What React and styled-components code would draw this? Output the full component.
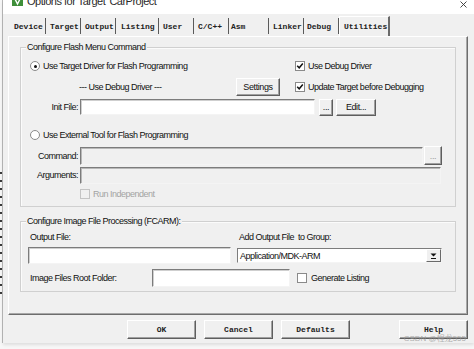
import React from "react";
import styled, { createGlobalStyle } from "styled-components";

const Global = createGlobalStyle`
  html, body { margin: 0; padding: 0; background: #f7f7f7; }
  body { font-family: "Liberation Sans", Arial, sans-serif; }
  * { box-sizing: border-box; }
`;

const px = (v) => (typeof v === "string" ? v : `${v || 0}px`);

const Page = styled.div`
  width: 474px;
  height: 349px;
  display: flex;
  overflow: hidden;
  background: #f7f7f7;
`;

const LeftEdge = styled.div`
  width: 3px;
  flex: none;
  height: 343px;
  background: #f6f6f6;
  border-right: 1px solid #b8b8b8;
  display: flex;
  flex-direction: column;
`;

const EdgeTicks = styled.div`
  margin-top: 172px;
  height: 128px;
  width: 2px;
  background: repeating-linear-gradient(to bottom, #3a3a3a 0 2px, transparent 2px 8px);
`;

const Window = styled.div`
  position: relative;
  flex: 1;
  height: 343px;
  background: #f0f0f0;
  display: flex;
  flex-direction: column;
  padding: 0 6px 0 5px;
  box-shadow: 0 2px 3px rgba(0, 0, 0, 0.1);
`;

const TitleBar = styled.div`
  height: 14px;
  margin: 0 -6px 0 -5px;
  background: #fff;
  display: flex;
  align-items: flex-start;
  padding-left: 9px;
  overflow: hidden;
`;

const TitleIcon = styled.svg`
  margin-top: -6px;
  flex: none;
`;

const TitleText = styled.span`
  margin-top: -4px;
  margin-left: 4px;
  font-size: 11px;
  line-height: 11px;
  letter-spacing: -0.5px;
  color: #2a2a2a;
  white-space: nowrap;
`;

const CloseIcon = styled.svg`
  margin-left: auto;
  margin-right: 7px;
  margin-top: 1px;
`;

const TabStrip = styled.div`
  height: 22px;
  display: flex;
  align-items: flex-end;
`;

const Tab = styled.div`
  width: ${(p) => p.$w}px;
  height: ${(p) => (p.$active ? 20 : 16)}px;
  padding-left: ${(p) => p.$pad}px;
  display: flex;
  align-items: center;
  font-family: "Liberation Mono", "Courier New", monospace;
  font-weight: bold;
  font-size: 8px;
  color: #222;
  white-space: nowrap;
  border-right: ${(p) => (p.$active ? "2px solid #6a6a6a" : "1px solid #5a5a5a")};
  border-top: ${(p) => (p.$active ? "1px solid #ffffff" : "none")};
  border-left: ${(p) => (p.$active ? "1px solid #ffffff" : "none")};
  margin-bottom: ${(p) => (p.$active ? 0 : 2)}px;
`;

const Panel = styled.div`
  width: 460px;
  height: 279px;
  border: 1px solid;
  border-color: #ffffff #6d6d6d #6d6d6d #ffffff;
  box-shadow: inset -1px -1px 0 #a8a8a8;
  padding: 10px 11px 0 11px;
  display: flex;
  flex-direction: column;
`;

const GroupBox = styled.div`
  position: relative;
  height: ${(p) => p.$h}px;
  margin-top: ${(p) => p.$mt || 0}px;
  border: 1px solid #d0d0d0;
  box-shadow: inset 1px 1px 0 #fbfbfb;
  padding: ${(p) => p.$pad};
  display: flex;
  flex-direction: column;
`;

const GroupTitle = styled.span`
  position: absolute;
  top: -6px;
  left: 5px;
  padding: 0 1px;
  background: #f0f0f0;
  font-size: 9px;
  line-height: 11px;
  letter-spacing: -0.5px;
  color: #111;
  white-space: nowrap;
`;

const Row = styled.div`
  display: flex;
  align-items: center;
  height: ${(p) => p.$h}px;
  margin-top: ${(p) => p.$mt || 0}px;
  padding-left: ${(p) => p.$pl || 0}px;
  flex: none;
`;

const Cell = styled.div`
  display: flex;
  align-items: center;
  width: ${(p) => p.$w}px;
  flex: none;
  height: 100%;
`;

const Text = styled.span`
  font-size: 9px;
  letter-spacing: -0.5px;
  color: ${(p) => (p.$disabled ? "#a3a3a3" : "#111")};
  white-space: nowrap;
  margin-left: ${(p) => px(p.$ml)};
`;

const FieldLabel = styled.span`
  width: ${(p) => (p.$w ? `${p.$w}px` : "auto")};
  flex: none;
  text-align: ${(p) => p.$align || "right"};
  padding-left: ${(p) => p.$pl || 0}px;
  font-size: 9px;
  letter-spacing: -0.5px;
  color: #111;
  white-space: nowrap;
`;

const Input = styled.div`
  width: ${(p) => p.$w}px;
  height: ${(p) => p.$h}px;
  flex: none;
  margin-left: ${(p) => px(p.$ml)};
  background: ${(p) => (p.$disabled ? "#f0f0f0" : "#ffffff")};
  border: 1px solid;
  border-color: #7c7c7c #f4f4f4 #f4f4f4 #7c7c7c;
  box-shadow: inset 1px 1px 0 ${(p) => (p.$disabled ? "#b8b8b8" : "#cfcfcf")};
`;

const Button = styled.div`
  width: ${(p) => p.$w}px;
  height: ${(p) => p.$h}px;
  flex: none;
  margin-left: ${(p) => px(p.$ml)};
  display: flex;
  align-items: center;
  justify-content: center;
  background: #f0f0f0;
  border: 1px solid;
  border-color: #ffffff #5e5e5e #5e5e5e #ffffff;
  box-shadow: inset -1px -1px 0 #a0a0a0;
  font-size: 9px;
  letter-spacing: -0.4px;
  color: ${(p) => (p.$disabled ? "#9a9a9a" : "#111")};
  white-space: nowrap;
`;

const BigButton = styled(Button)`
  font-family: "Liberation Mono", "Courier New", monospace;
  font-weight: bold;
  font-size: 8px;
  letter-spacing: 0;
  color: #222;
`;

const RadioCircle = styled.span`
  width: 10px;
  height: 10px;
  flex: none;
  border-radius: 50%;
  background: #fff;
  border: 1px solid #8a8a8a;
  display: flex;
  align-items: center;
  justify-content: center;
  &::after {
    content: "";
    width: 3px;
    height: 3px;
    border-radius: 50%;
    background: ${(p) => (p.$on ? "#111" : "transparent")};
  }
`;

const CheckBox = styled.span`
  width: 10px;
  height: 10px;
  flex: none;
  background: ${(p) => (p.$disabled ? "#f0f0f0" : "#fff")};
  border: 1px solid ${(p) => (p.$disabled ? "#c4c4c4" : "#8a8a8a")};
  display: flex;
  align-items: center;
  justify-content: center;
`;

const ImageGrid = styled.div`
  display: grid;
  grid-template-columns: 203px 205px;
  column-gap: 6px;
  align-items: center;
  height: ${(p) => p.$h}px;
  margin-top: ${(p) => p.$mt || 0}px;
`;

const Select = styled.div`
  width: 205px;
  height: 15px;
  display: flex;
  align-items: center;
  background: #fff;
  border: 1px solid;
  border-color: #7c7c7c #f4f4f4 #f4f4f4 #7c7c7c;
  padding-left: 2px;
  font-size: 9px;
  letter-spacing: -0.5px;
  color: #111;
`;

const SelectArrow = styled.span`
  margin-left: auto;
  width: 15px;
  height: 13px;
  display: flex;
  align-items: center;
  justify-content: center;
  background: #f0f0f0;
  border: 1px solid;
  border-color: #ffffff #6a6a6a #6a6a6a #ffffff;
`;

const ButtonBar = styled.div`
  display: flex;
  align-items: center;
  gap: 8px;
  margin-top: 5px;
  padding-left: 119px;
  height: 19px;
  width: 460px;
`;

const HelpSlot = styled.div`
  margin-left: auto;
  display: flex;
`;

const Watermark = styled.span`
  position: absolute;
  right: 8px;
  bottom: 0px;
  font-family: "Liberation Sans", "Noto Sans CJK SC", sans-serif;
  font-size: 8px;
  line-height: 9px;
  color: rgba(150, 150, 150, 0.75);
  white-space: nowrap;
`;

const Check = ({ on = true, disabled }) => (
  <CheckBox $disabled={disabled}>
    {on && (
      <svg width="8" height="8" viewBox="0 0 8 8">
        <path d="M1.2 3.8 L3.2 5.8 L6.8 1.6" fill="none" stroke="#111" strokeWidth="1.5" />
      </svg>
    )}
  </CheckBox>
);

const tabs = [
  { label: "Device", w: 38, pad: 6 },
  { label: "Target", w: 35, pad: 4 },
  { label: "Output", w: 35, pad: 4 },
  { label: "Listing", w: 43, pad: 5 },
  { label: "User", w: 35, pad: 4 },
  { label: "C/C++", w: 35, pad: 4 },
  { label: "Asm", w: 40, pad: 2 },
  { label: "Linker", w: 35, pad: 4 },
  { label: "Debug", w: 35, pad: 3 },
  { label: "Utilities", w: 51, pad: 4, active: true },
];

export default function App() {
  return (
    <>
      <Global />
      <Page>
        <LeftEdge>
          <EdgeTicks />
        </LeftEdge>
        <Window>
          <TitleBar>
            <TitleIcon width="11" height="12" viewBox="0 0 11 12">
              <rect x="0" y="0" width="11" height="12" fill="#3f8f3a" />
              <path d="M2.5 4 L5.5 10 L8.5 4" fill="none" stroke="#ffffff" strokeWidth="1.4" />
            </TitleIcon>
            <TitleText>Options for Target 'CarProject'</TitleText>
            <CloseIcon width="7" height="7" viewBox="0 0 7 7">
              <path d="M0.5 0.5 L6.5 6.5 M6.5 0.5 L0.5 6.5" stroke="#333" strokeWidth="0.9" />
            </CloseIcon>
          </TitleBar>

          <TabStrip>
            {tabs.map((t) => (
              <Tab key={t.label} $w={t.w} $pad={t.pad} $active={t.active}>
                {t.label}
              </Tab>
            ))}
          </TabStrip>

          <Panel>
            <GroupBox $h={160} $pad="12px 0 0 9px">
              <GroupTitle>Configure Flash Menu Command</GroupTitle>

              <Row $h={12}>
                <Cell $w={265}>
                  <RadioCircle $on />
                  <Text $ml={3}>Use Target Driver for Flash Programming</Text>
                </Cell>
                <Check />
                <Text $ml={3}>Use Debug Driver</Text>
              </Row>

              <Row $h={18} $mt={6}>
                <Cell $w={250}>
                  <Text $ml={49}>--- Use Debug Driver ---</Text>
                  <Button $w={44} $h={18} $ml="auto">Settings</Button>
                </Cell>
                <Cell $w={15} />
                <Check />
                <Text $ml={3}>Update Target before Debugging</Text>
              </Row>

              <Row $h={18} $mt={2}>
                <FieldLabel $w={48}>Init File:</FieldLabel>
                <Input $w={235} $h={16} $ml={2} />
                <Button $w={14} $h={17} $ml={4}>...</Button>
                <Button $w={40} $h={17} $ml={3}>Edit...</Button>
              </Row>

              <Row $h={12} $mt={13}>
                <RadioCircle />
                <Text $ml={3}>Use External Tool for Flash Programming</Text>
              </Row>

              <Row $h={19} $mt={5}>
                <FieldLabel $w={48}>Command:</FieldLabel>
                <Input $w={343} $h={18} $ml={2} $disabled />
                <Button $w={18} $h={19} $ml={1} $disabled>...</Button>
              </Row>

              <Row $h={18} $mt={1}>
                <FieldLabel $w={48}>Arguments:</FieldLabel>
                <Input $w={361} $h={17} $ml={2} $disabled />
              </Row>

              <Row $h={11} $mt={4} $pl={50}>
                <Check on={false} disabled />
                <Text $ml={3} $disabled>Run Independent</Text>
              </Row>
            </GroupBox>

            <GroupBox $h={71} $mt={14} $pad="10px 0 0 7px">
              <GroupTitle>Configure Image File Processing (FCARM):</GroupTitle>

              <ImageGrid $h={10}>
                <FieldLabel $align="left" $pl={2}>Output File:</FieldLabel>
                <FieldLabel $align="left" $pl={2}>Add Output File&nbsp; to Group:</FieldLabel>
              </ImageGrid>

              <ImageGrid $h={17} $mt={5}>
                <Input $w={203} $h={17} />
                <Select>
                  Application/MDK-ARM
                  <SelectArrow>
                    <svg width="7" height="6" viewBox="0 0 7 6">
                      <path d="M0.5 0.5 L6.5 0.5 L3.5 3.5 Z" fill="#111" />
                      <path d="M1 5.5 L6 5.5" stroke="#111" strokeWidth="1" />
                    </svg>
                  </SelectArrow>
                </Select>
              </ImageGrid>

              <Row $h={19} $mt={4}>
                <FieldLabel $w={124} $align="left" $pl={2}>Image Files Root Folder:</FieldLabel>
                <Input $w={138} $h={18} />
                <Cell $w={7} />
                <Check on={false} />
                <Text $ml={4}>Generate Listing</Text>
              </Row>
            </GroupBox>
          </Panel>

          <ButtonBar>
            <BigButton $w={69} $h={19}>OK</BigButton>
            <BigButton $w={69} $h={19}>Cancel</BigButton>
            <BigButton $w={69} $h={19}>Defaults</BigButton>
            <HelpSlot>
              <BigButton $w={69} $h={19}>Help</BigButton>
            </HelpSlot>
          </ButtonBar>

          <Watermark>CSDN @程龙555</Watermark>
        </Window>
      </Page>
    </>
  );
}
